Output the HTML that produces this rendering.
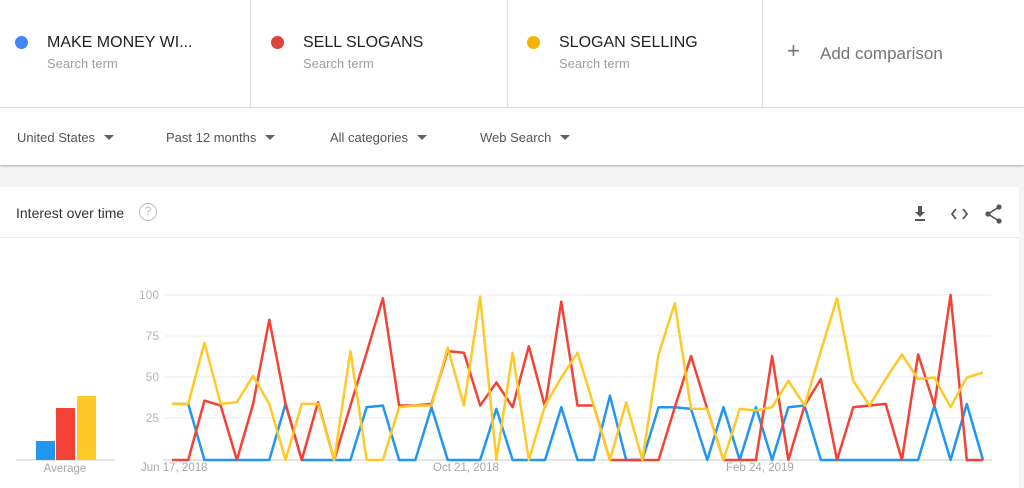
<!DOCTYPE html>
<html><head><meta charset="utf-8"><style>
*{margin:0;padding:0;box-sizing:border-box}
body{width:1024px;height:488px;overflow:hidden;background:#f5f5f5;font-family:"Liberation Sans",Arial,sans-serif;position:relative}
.top{position:absolute;left:0;top:0;width:1024px;height:108px;background:#fff;border-bottom:1px solid #e0e0e0}
.term{position:absolute;top:0;height:108px;width:240px}
.dot{position:absolute;left:15px;top:36px;width:13px;height:13px;border-radius:50%}
.name{position:absolute;left:47px;top:34px;font-size:16px;color:#222;white-space:nowrap}
.sub{position:absolute;left:47px;top:56px;font-size:13px;color:#9e9e9e;white-space:nowrap}
.div{position:absolute;top:0;width:1px;height:108px;background:#e0e0e0}
.filters{position:absolute;left:0;top:108px;width:1024px;height:57px;background:#fff;box-shadow:0 1px 2px rgba(0,0,0,.3)}
.f{position:absolute;top:22px;font-size:13px;color:#555;white-space:nowrap}
.f:after{content:"";display:inline-block;margin-left:9px;border-left:5px solid transparent;border-right:5px solid transparent;border-top:5px solid #616161;vertical-align:2px}
.card{position:absolute;left:0;top:187px;width:1019px;height:301px;background:#fff}
.hd{position:absolute;left:16px;top:18px;font-size:14px;color:#333}
.q{position:absolute;left:139px;top:16px;width:18px;height:18px;border:1.5px solid #bdbdbd;border-radius:50%;font-size:12px;color:#bdbdbd;text-align:center;line-height:15px}
.hr{position:absolute;left:0;top:50px;width:1019px;height:1px;background:#e8e8e8}
</style></head><body>
<div class="top">
 <div class="term" style="left:0"><div class="dot" style="background:#4285f4"></div><div class="name">MAKE MONEY WI...</div><div class="sub">Search term</div></div>
 <div class="div" style="left:250px"></div>
 <div class="term" style="left:256px"><div class="dot" style="background:#db4437"></div><div class="name">SELL SLOGANS</div><div class="sub">Search term</div></div>
 <div class="div" style="left:507px"></div>
 <div class="term" style="left:512px"><div class="dot" style="background:#f4b400"></div><div class="name">SLOGAN SELLING</div><div class="sub">Search term</div></div>
 <div class="div" style="left:762px"></div>
 <div style="position:absolute;left:787px;top:40px;font-size:22px;color:#757575;line-height:22px;font-weight:300">+</div>
 <div style="position:absolute;left:820px;top:44px;font-size:17px;color:#757575;white-space:nowrap">Add comparison</div>
</div>
<div class="filters">
 <div class="f" style="left:17px">United States</div>
 <div class="f" style="left:166px">Past 12 months</div>
 <div class="f" style="left:330px">All categories</div>
 <div class="f" style="left:480px">Web Search</div>
</div>
<div class="card">
 <div class="hd">Interest over time</div><div class="q">?</div>
 <svg style="position:absolute;left:912px;top:16px" width="100" height="22" viewBox="0 0 100 22">
  <path d="M6 3h4v6h3l-5 5-5-5h3z" fill="#555"/><rect x="3" y="16" width="10" height="2" fill="#555"/>
  <path d="M44 6l-4 5 4 5M51 6l4 5-4 5" stroke="#555" stroke-width="1.8" fill="none"/>
  <circle cx="87" cy="4" r="2.6" fill="#555"/><circle cx="76" cy="11" r="2.6" fill="#555"/><circle cx="87" cy="18" r="2.6" fill="#555"/>
  <path d="M87 4L76 11L87 18" stroke="#555" stroke-width="1.6" fill="none"/>
 </svg>
 <div class="hr"></div>
</div>
<svg style="position:absolute;left:0;top:0" width="1024" height="488" font-family="Liberation Sans, Arial, sans-serif">
 <g stroke="#ebebeb" stroke-width="1">
  <line x1="165" y1="295" x2="991" y2="295"/><line x1="165" y1="336" x2="991" y2="336"/>
  <line x1="165" y1="377" x2="991" y2="377"/><line x1="165" y1="418" x2="991" y2="418"/>
 </g>
 <line x1="163" y1="460" x2="992" y2="460" stroke="#ccc"/>
 <line x1="16" y1="460" x2="115" y2="460" stroke="#ccc"/>
 <g fill="#b5b5b5" font-size="12" text-anchor="end">
  <text x="159" y="299">100</text><text x="159" y="340">75</text><text x="159" y="381">50</text><text x="159" y="422">25</text>
 </g>
 <g fill="#a8a8a8" font-size="11.5">
  <text x="141" y="471">Jun 17, 2018</text><text x="433" y="471">Oct 21, 2018</text><text x="726" y="471">Feb 24, 2019</text>
  <text x="65" y="472" text-anchor="middle">Average</text>
 </g>
 <rect x="36" y="441" width="19" height="19" fill="#2196f3"/>
 <rect x="56" y="408" width="19" height="52" fill="#f44336"/>
 <rect x="77" y="396" width="19" height="64" fill="#ffca28"/>
 <g transform="translate(172,460) scale(16.22,-1.65)" fill="none" stroke-width="2.5" stroke-linejoin="round">
  <polyline vector-effect="non-scaling-stroke" stroke="#2196f3" points="0,34 1,34 2,0 3,0 4,0 5,0 6,0 7,34 8,0 9,0 10,0 11,0 12,32 13,33 14,0 15,0 16,32 17,0 18,0 19,0 20,31 21,0 22,0 23,0 24,32 25,0 26,0 27,39 28,0 29,0 30,32 31,32 32,31 33,0 34,32 35,0 36,32 37,0 38,32 39,33 40,0 41,0 42,0 43,0 44,0 45,0 46,0 47,33 48,0 49,34 50,0"/>
  <polyline vector-effect="non-scaling-stroke" stroke="#f44336" points="0,0 1,0 2,36 3,33 4,0 5,34 6,85 7,34 8,0 9,35 10,0 11,33 12,65 13,98 14,33 15,33 16,34 17,66 18,65 19,33 20,47 21,32 22,69 23,32 24,96 25,33 26,33 27,0 28,0 29,0 30,0 31,32 32,63 33,31 34,0 35,0 36,0 37,63 38,0 39,33 40,49 41,0 42,32 43,33 44,34 45,0 46,64 47,33 48,100 49,0 50,0"/>
  <polyline vector-effect="non-scaling-stroke" stroke="#ffca28" points="0,34 1,34 2,71 3,34 4,35 5,51 6,34 7,0 8,34 9,34 10,0 11,66 12,0 13,0 14,32 15,33 16,33 17,68 18,33 19,99 20,0 21,65 22,0 23,33 24,50 25,65 26,33 27,0 28,35 29,0 30,64 31,95 32,31 33,31 34,0 35,31 36,30 37,32 38,48 39,33 40,66 41,98 42,48 43,33 44,49 45,64 46,49 47,50 48,32 49,50 50,53"/>
 </g>
</svg>
</body></html>
